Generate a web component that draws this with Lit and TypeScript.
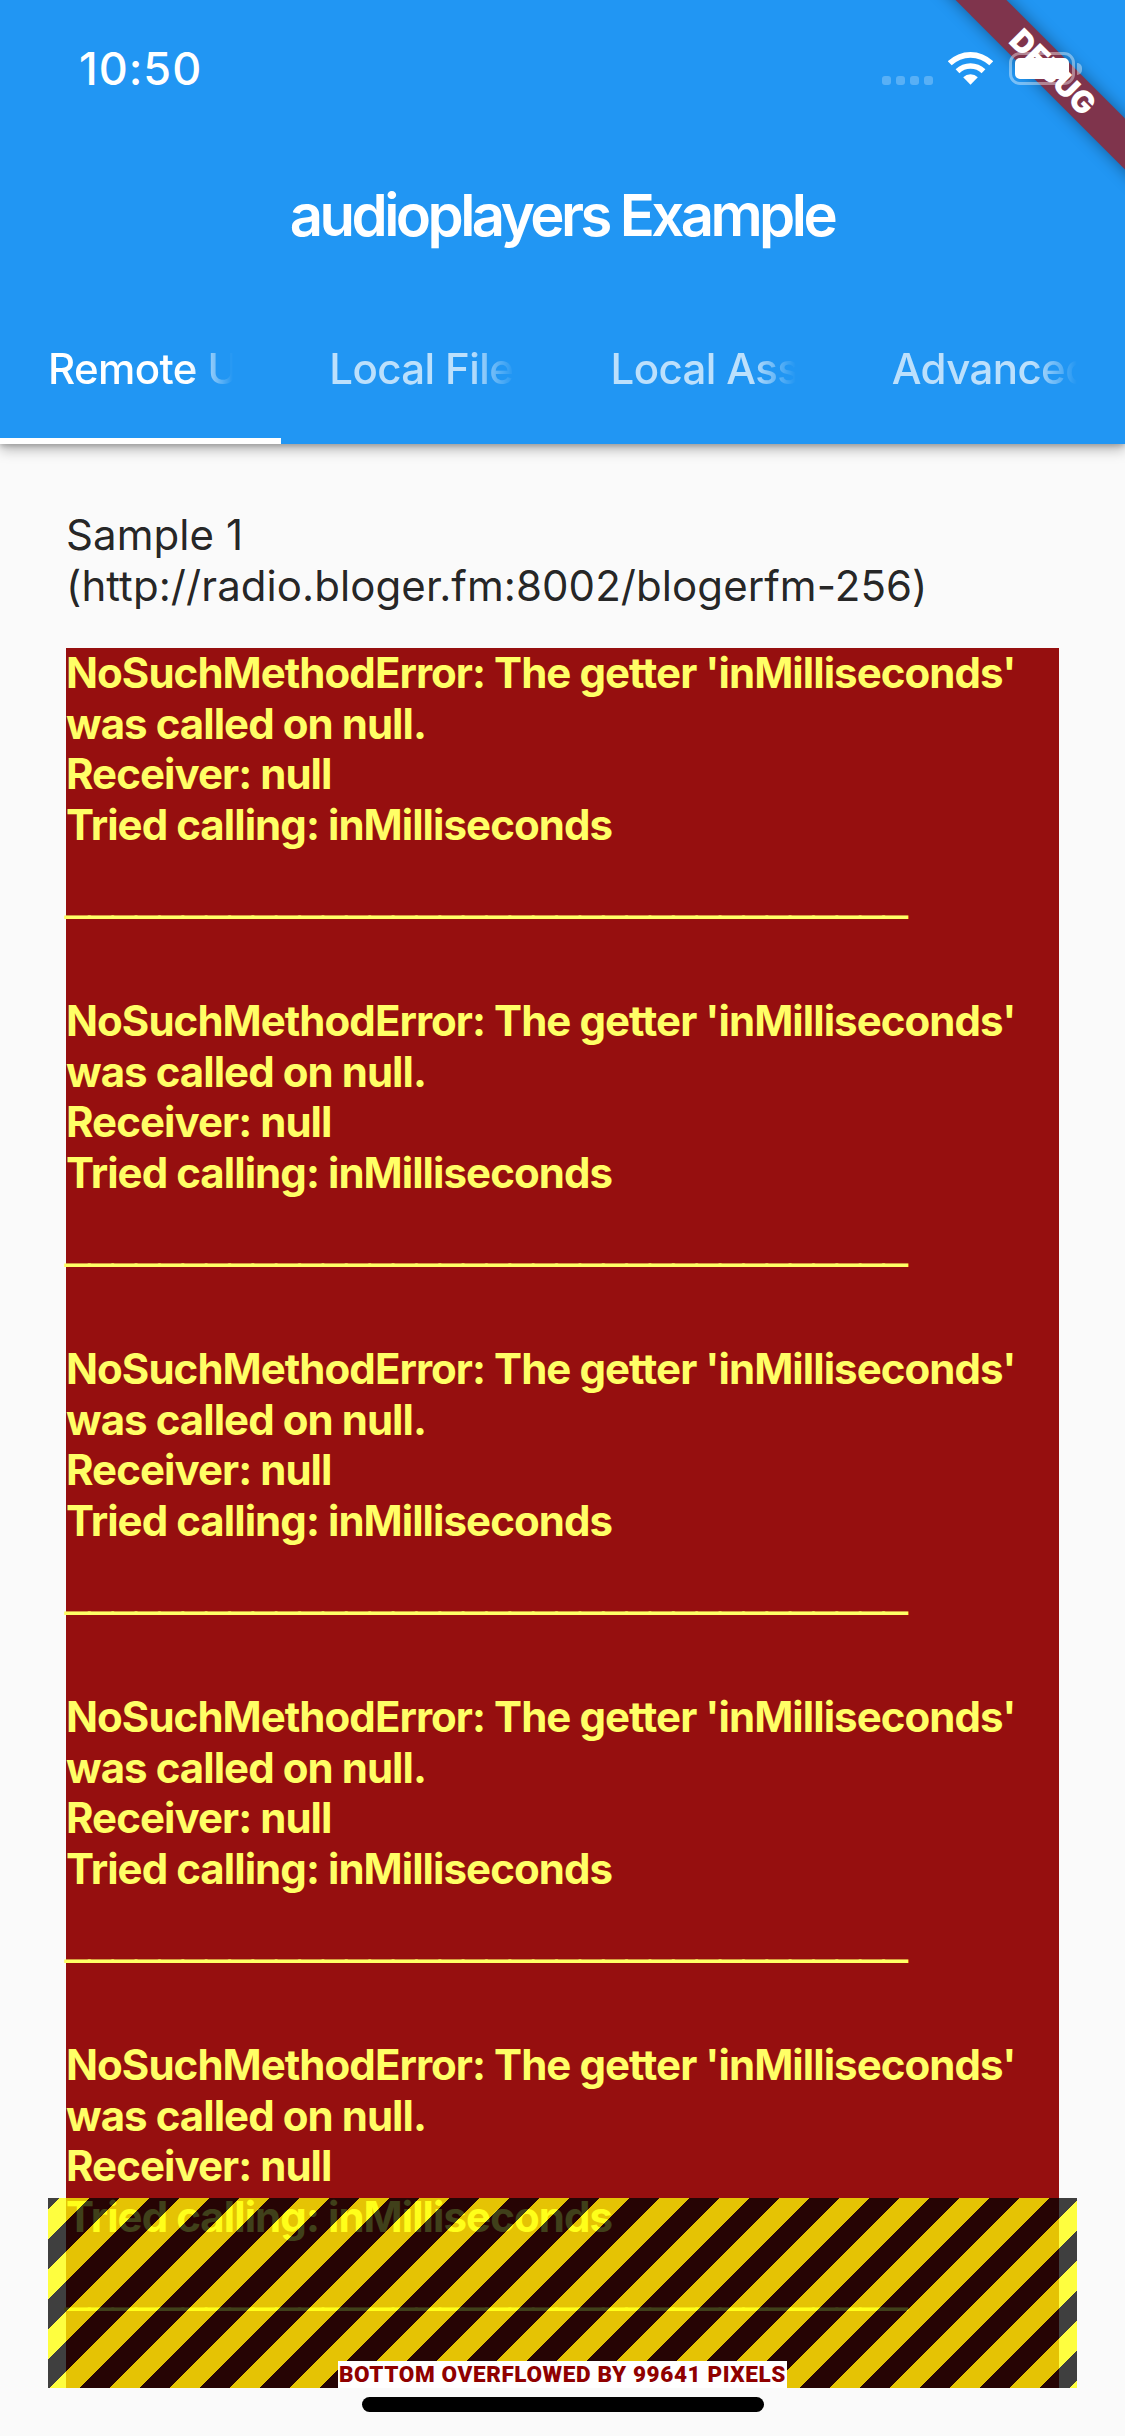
import { LitElement, html, css } from "lit";
import { customElement } from "lit/decorators.js";

const TABS = ["Remote URL", "Local File", "Local Asset", "Advanced"];
const ERROR_LINES = [
  "NoSuchMethodError: The getter 'inMilliseconds'",
  "was called on null.",
  "Receiver: null",
  "Tried calling: inMilliseconds",
];

@customElement("app-root")
export class AppRoot extends LitElement {
  static styles = css`
    :host {
      display: block;
      position: relative;
      width: 1125px;
      height: 2436px;
      overflow: hidden;
      background: #fafafa;
      font-family: Inter, "Liberation Sans", sans-serif;
    }
    .appbar {
      position: relative;
      z-index: 2;
      background: #2196f3;
      color: #fff;
      box-shadow: 0 6px 12px rgba(0, 0, 0, 0.26), 0 2px 5px rgba(0, 0, 0, 0.2);
    }
    .status {
      position: relative;
      z-index: 3;
      height: 132px;
      box-sizing: border-box;
      padding: 52px 43px 0 79px;
      display: flex;
      justify-content: space-between;
      align-items: flex-start;
    }
    .time {
      font-size: 45px;
      line-height: 34px;
      font-weight: 500;
      letter-spacing: 1px;
    }
    .icons {
      display: flex;
      align-items: flex-end;
      height: 33px;
    }
    .dots {
      display: flex;
      gap: 5px;
      margin-right: 15px;
    }
    .dot {
      width: 9px;
      height: 9px;
      border-radius: 3px;
      background: rgba(255, 255, 255, 0.25);
    }
    .wifi {
      display: block;
      width: 45px;
      height: 33px;
      margin-right: 16px;
    }
    .battery {
      display: flex;
      align-items: center;
    }
    .battery-body {
      box-sizing: border-box;
      width: 66px;
      height: 33px;
      padding: 3px;
      border: 3px solid rgba(255, 255, 255, 0.4);
      border-radius: 11px;
      display: flex;
    }
    .battery-fill {
      flex: 1;
      background: #fff;
      border-radius: 5px;
    }
    .battery-nub {
      width: 5px;
      height: 12px;
      margin-left: 2px;
      background: rgba(255, 255, 255, 0.4);
      border-radius: 0 6px 6px 0;
    }
    .toolbar {
      height: 168px;
      display: flex;
      justify-content: center;
      align-items: center;
    }
    .title {
      font-size: 58px;
      font-weight: 600;
      letter-spacing: -3.55px;
      margin-bottom: 2px;
      margin-right: 1px;
      white-space: nowrap;
    }
    .tabs {
      height: 144px;
      display: flex;
    }
    .tab {
      flex: 1;
      min-width: 0;
      box-sizing: border-box;
      padding: 0 48px 6px;
      display: flex;
      align-items: center;
      color: rgba(255, 255, 255, 0.7);
    }
    .tab.on {
      color: #fff;
      padding-bottom: 0;
      border-bottom: 6px solid #fff;
    }
    .tab-label {
      width: 100%;
      overflow: hidden;
      white-space: nowrap;
      font-size: 42px;
      line-height: 50px;
      font-weight: 500;
      letter-spacing: -0.6px;
      -webkit-mask-image: linear-gradient(to right, #000 calc(100% - 44px), transparent);
      mask-image: linear-gradient(to right, #000 calc(100% - 44px), transparent);
    }
    .content {
      position: relative;
      height: 1944px;
      box-sizing: border-box;
      padding: 65px 66px 0;
      overflow: hidden;
    }
    .sample {
      font-size: 42px;
      line-height: 51px;
      font-weight: 400;
      letter-spacing: 0.07px;
      color: rgba(0, 0, 0, 0.87);
      white-space: nowrap;
      margin-bottom: 37px;
    }
    .errors {
      background: #960f0f;
      color: #ffff66;
    }
    .err {
      height: 348px;
      box-sizing: border-box;
    }
    .err-line {
      font-size: 42px;
      line-height: 50.5px;
      font-weight: 700;
      letter-spacing: -0.95px;
      white-space: nowrap;
    }
    .sep {
      font-family: "Liberation Sans", sans-serif;
      font-size: 42px;
      line-height: 50px;
      font-weight: 700;
      padding-top: 24px;
      white-space: nowrap;
      -webkit-text-stroke: 2px #ffff66;
    }
    .hazard {
      position: absolute;
      left: 48px;
      right: 48px;
      bottom: 0;
      height: 190px;
      display: flex;
      justify-content: center;
      align-items: flex-end;
      background-image: linear-gradient(
        135deg,
        rgba(0, 0, 0, 0.75) 0 10%,
        rgba(255, 255, 0, 0.75) 10% 35%,
        rgba(0, 0, 0, 0.75) 35% 60%,
        rgba(255, 255, 0, 0.75) 60% 85%,
        rgba(0, 0, 0, 0.75) 85% 100%
      );
      background-size: 60px 60px;
    }
    .hazard-label {
      padding: 0 1px;
      height: 27px;
      background: #fff;
      color: #900000;
      font-family: Roboto, "Liberation Sans", sans-serif;
      font-size: 22.5px;
      font-weight: 900;
      letter-spacing: 0.62px;
      line-height: 27px;
      text-align: center;
      white-space: nowrap;
    }
    .banner-clip {
      position: absolute;
      top: 0;
      right: 0;
      width: 300px;
      height: 300px;
      overflow: hidden;
      z-index: 1;
    }
    .banner {
      position: absolute;
      left: 28px;
      top: 53.5px;
      width: 400px;
      height: 36px;
      background: #7f344c;
      box-shadow: 0 0 16px rgba(0, 0, 0, 0.4);
      color: #fff;
      font-size: 30.6px;
      font-weight: 900;
      line-height: 36px;
      text-align: center;
      transform: rotate(45deg);
    }
    .home {
      position: absolute;
      left: 361.5px;
      bottom: 24px;
      width: 402px;
      height: 15px;
      border-radius: 8px;
      background: #000;
    }
  `;

  render() {
    return html`
      <div class="appbar">
        <div class="banner-clip"><div class="banner">DEBUG</div></div>
        <div class="status">
          <div class="time">10:50</div>
          <div class="icons">
            <div class="dots">
              <div class="dot"></div>
              <div class="dot"></div>
              <div class="dot"></div>
              <div class="dot"></div>
            </div>
            <svg class="wifi" viewBox="0 0 45 33" fill="#fff">
              <path d="M-.2 9.2A32.7 32.7 0 0 1 45.2 9.2L41.3 13.3A27 27 0 0 0 3.7 13.3Z" />
              <path d="M7.6 17.2A21.5 21.5 0 0 1 37.4 17.2L33.6 21.2A16 16 0 0 0 11.4 21.2Z" />
              <path d="M15.2 25.15A10.5 10.5 0 0 1 29.8 25.15L22.5 32.7Z" />
            </svg>
            <div class="battery">
              <div class="battery-body"><div class="battery-fill"></div></div>
              <div class="battery-nub"></div>
            </div>
          </div>
        </div>
        <div class="toolbar"><div class="title">audioplayers Example</div></div>
        <div class="tabs">
          ${TABS.map(
            (t, i) => html`<div class="tab ${i === 0 ? "on" : ""}"><div class="tab-label">${t}</div></div>`
          )}
        </div>
      </div>
      <div class="content">
        <div class="sample">
          <div>Sample 1</div>
          <div>(http://radio.bloger.fm:8002/blogerfm-256)</div>
        </div>
        <div class="errors">
          ${[0, 1, 2, 3, 4, 5].map(
            () => html`<div class="err">
              ${ERROR_LINES.map((l) => html`<div class="err-line">${l}</div>`)}
              <div class="sep">${"_".repeat(36)}</div>
            </div>`
          )}
        </div>
        <div class="hazard">
          <div class="hazard-label">BOTTOM OVERFLOWED BY 99641 PIXELS</div>
        </div>
      </div>
      <div class="home"></div>
    `;
  }
}
